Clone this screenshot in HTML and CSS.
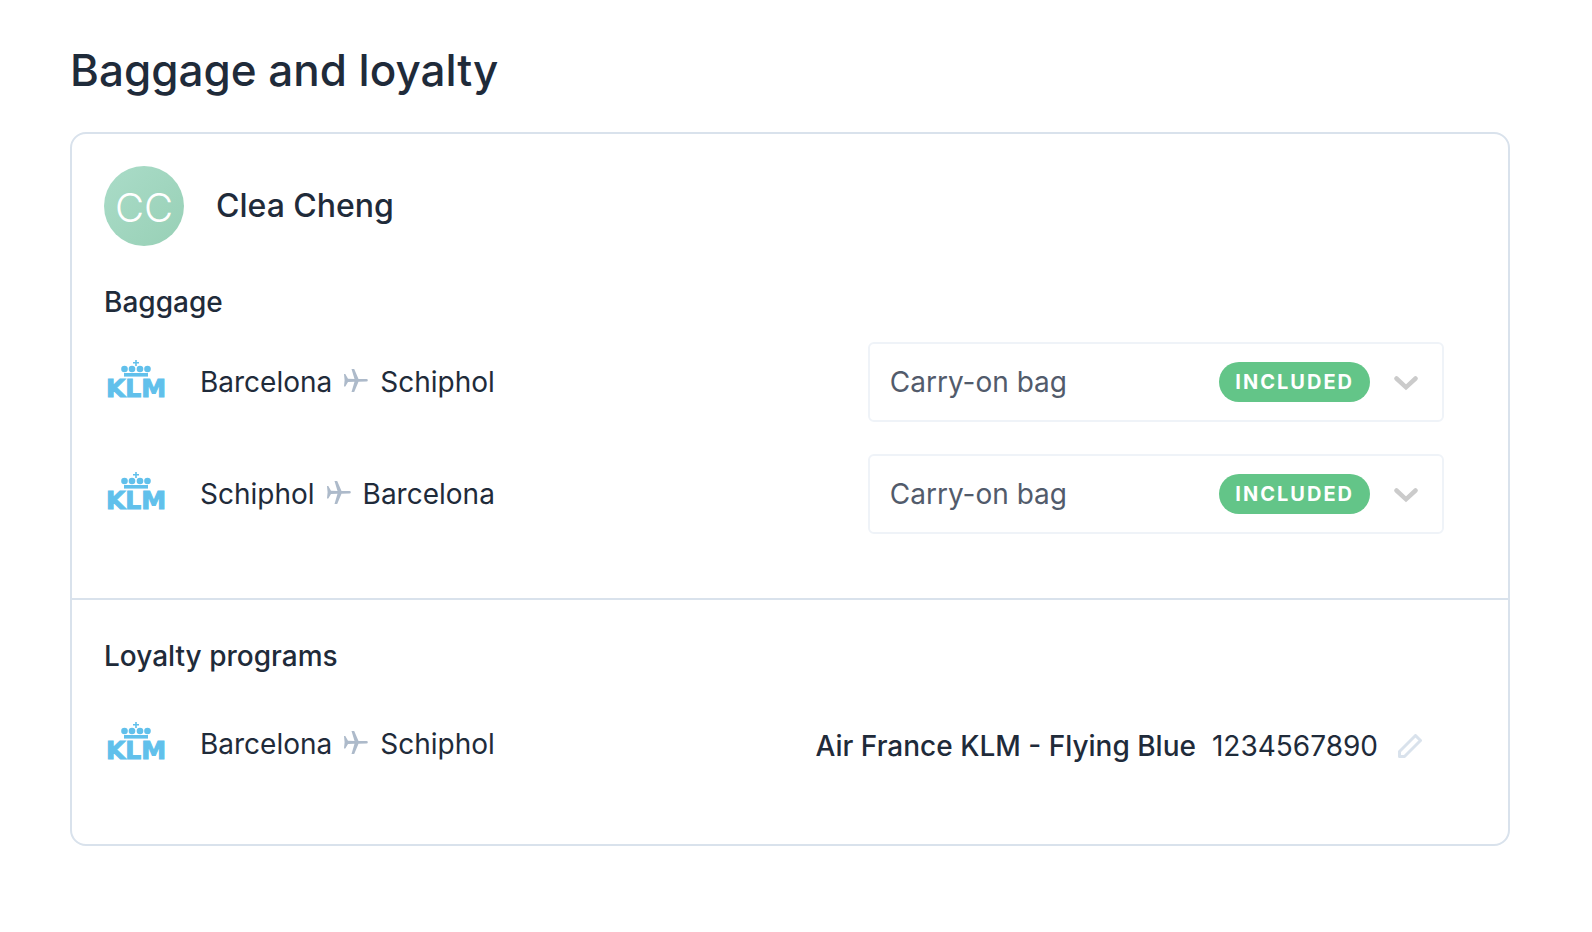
FILE: index.html
```html
<!doctype html>
<html lang="en">
<head>
  <meta charset="UTF-8">
  <meta name="viewport" content="width=device-width, initial-scale=1">
  <title>Baggage and loyalty</title>
  <link rel="stylesheet" href="styles.css">
</head>
<body>
  <!-- shared icons -->
  <svg class="sprite" aria-hidden="true">
    <symbol id="klm" viewBox="0 0 64 44">
      <path d="M31.200 0h1.600v2h2.200v1.600h-2.200v2.400h-1.600v-2.400h-2.200v-1.600h2.200z"/>
      <circle cx="20.500" cy="9" r="3.300"/>
      <circle cx="28" cy="9" r="3.300"/>
      <circle cx="36" cy="9" r="3.300"/>
      <circle cx="43.500" cy="9" r="3.300"/>
      <path d="M20 13h24v3.600h-24z"/>
      <text class="klm-text" x="32" y="37" text-anchor="middle">KLM</text>
    </symbol>
    <symbol id="plane" viewBox="0 0 24 28">
      <path d="M0 6h1.300l2.700 4.700 6.500.2L7.500 1h2.700l4.300 9.900 8 .1a1.300 1.300 0 0 1 0 2.600l-8 .1L10.200 24H7.500l3-10.300-6.500.2-2.700 4.700H0l.6-6.300z"/>
    </symbol>
    <symbol id="chevron" viewBox="0 0 24 24">
      <path d="M2.500 8.500l9.500 8.800L21.500 8.500" fill="none" stroke="currentColor" stroke-width="4.500" stroke-linecap="round" stroke-linejoin="miter"/>
    </symbol>
  </svg>

  <main class="page">
    <h1>Baggage and loyalty</h1>

    <div class="card">
      <section class="section">
        <div class="passenger">
          <span class="avatar">CC</span>
          <h2>Clea Cheng</h2>
        </div>

        <h3>Baggage</h3>
        <div class="rows">
          <div class="row">
            <svg class="logo" role="img" aria-label="KLM"><use href="#klm"/></svg>
            <label class="route" for="bag-1">Barcelona <svg class="plane"><use href="#plane"/></svg> Schiphol</label>
            <div class="select">
              <select id="bag-1">
                <option>Carry-on bag</option>
              </select>
              <span class="badge">INCLUDED</span>
              <svg class="chevron"><use href="#chevron"/></svg>
            </div>
          </div>
          <div class="row">
            <svg class="logo" role="img" aria-label="KLM"><use href="#klm"/></svg>
            <label class="route" for="bag-2">Schiphol <svg class="plane"><use href="#plane"/></svg> Barcelona</label>
            <div class="select">
              <select id="bag-2">
                <option>Carry-on bag</option>
              </select>
              <span class="badge">INCLUDED</span>
              <svg class="chevron"><use href="#chevron"/></svg>
            </div>
          </div>
        </div>
      </section>

      <section class="section loyalty">
        <h3>Loyalty programs</h3>
        <div class="row">
          <svg class="logo" role="img" aria-label="KLM"><use href="#klm"/></svg>
          <span class="route">Barcelona <svg class="plane"><use href="#plane"/></svg> Schiphol</span>
          <div class="program">
            <strong>Air France KLM - Flying Blue</strong>
            <span>1234567890</span>
            <button class="edit" type="button" aria-label="Edit loyalty program">
              <svg viewBox="0 0 24 24"><path d="M1.500 22.500v-5L17.500 1.500l5 5L6.500 22.500z"/></svg>
            </button>
          </div>
        </div>
      </section>
    </div>
  </main>
</body>
</html>
```
FILE: styles.css
```css
* {
  box-sizing: border-box;
}

body {
  margin: 0;
  background-color: #fff;
  color: #1f2b3a;
  font-family: Inter, "Liberation Sans", sans-serif;
  font-size: 28px;
  line-height: 32px;
}

h1, h2, h3 {
  margin: 0;
  font-weight: 500;
}

h1 {
  margin-bottom: 32px;
  font-size: 44px;
  line-height: 60px;
}

h2 {
  font-size: 32px;
  line-height: 40px;
}

h3 {
  font-size: 28px;
  line-height: 32px;
}

.sprite {
  display: none;
}

.page {
  padding: 40px 82px 40px 70px;
}

.card {
  border: 2px solid #d9e2ec;
  border-radius: 16px;
}

.section {
  padding: 32px 64px 64px 32px;
}

.loyalty {
  padding-top: 40px;
  padding-bottom: 60px;
  border-top: 2px solid #d9e2ec;
}

.passenger {
  display: flex;
  align-items: center;
  gap: 32px;
  margin-bottom: 40px;
}

.avatar {
  width: 80px;
  height: 80px;
  border-radius: 50%;
  background: linear-gradient(135deg, #aadcc8, #98d0b6);
  color: #fff;
  font-size: 40px;
  font-weight: 300;
  line-height: 84px;
  text-align: center;
}

/* rows */
.rows {
  display: grid;
  gap: 32px;
  margin-top: 24px;
}

.row {
  display: flex;
  align-items: center;
  min-height: 80px;
}

.loyalty .row {
  margin-top: 32px;
}

.logo {
  flex: none;
  width: 64px;
  height: 44px;
  margin-right: 32px;
  fill: #61c0eb;
}

.klm-text {
  font-family: "DejaVu Sans", sans-serif;
  font-size: 25px;
  font-weight: 700;
  stroke: #61c0eb;
  stroke-width: 1px;
}

.route {
  display: flex;
  align-items: center;
  gap: 12px;
  margin-right: auto;
}

.plane {
  width: 24px;
  height: 28px;
  fill: #adbaca;
}

/* baggage drop-down */
.select {
  display: grid;
  grid-template-columns: 1fr auto auto;
  align-items: center;
  width: 43%;
  height: 80px;
}

.select select {
  grid-area: 1 / 1 / 2 / 4;
  width: 100%;
  height: 100%;
  padding: 0 20px;
  border: 2px solid #eff3f8;
  border-radius: 6px;
  background: none;
  color: #525b6b;
  font: inherit;
  appearance: none;
}

.badge {
  grid-area: 1 / 2;
  padding: 0 16px;
  border-radius: 20px;
  background-color: #63c588;
  color: #fff;
  font-size: 20px;
  font-weight: 700;
  letter-spacing: 2px;
  line-height: 40px;
  pointer-events: none;
}

.chevron {
  grid-area: 1 / 3;
  width: 24px;
  height: 24px;
  margin: 0 26px 0 24px;
  color: #cbcbcb;
  pointer-events: none;
}

/* loyalty program */
.program {
  display: flex;
  align-items: center;
  gap: 16px;
  padding-top: 4px;
}

.program strong {
  font-weight: 500;
}

.edit {
  display: flex;
  padding: 4px 22px 4px 4px;
  border: 0;
  background: none;
  cursor: pointer;
}

.edit svg {
  width: 24px;
  height: 24px;
  fill: none;
  stroke: #d9e2ec;
  stroke-width: 3px;
  stroke-linejoin: round;
}
```
